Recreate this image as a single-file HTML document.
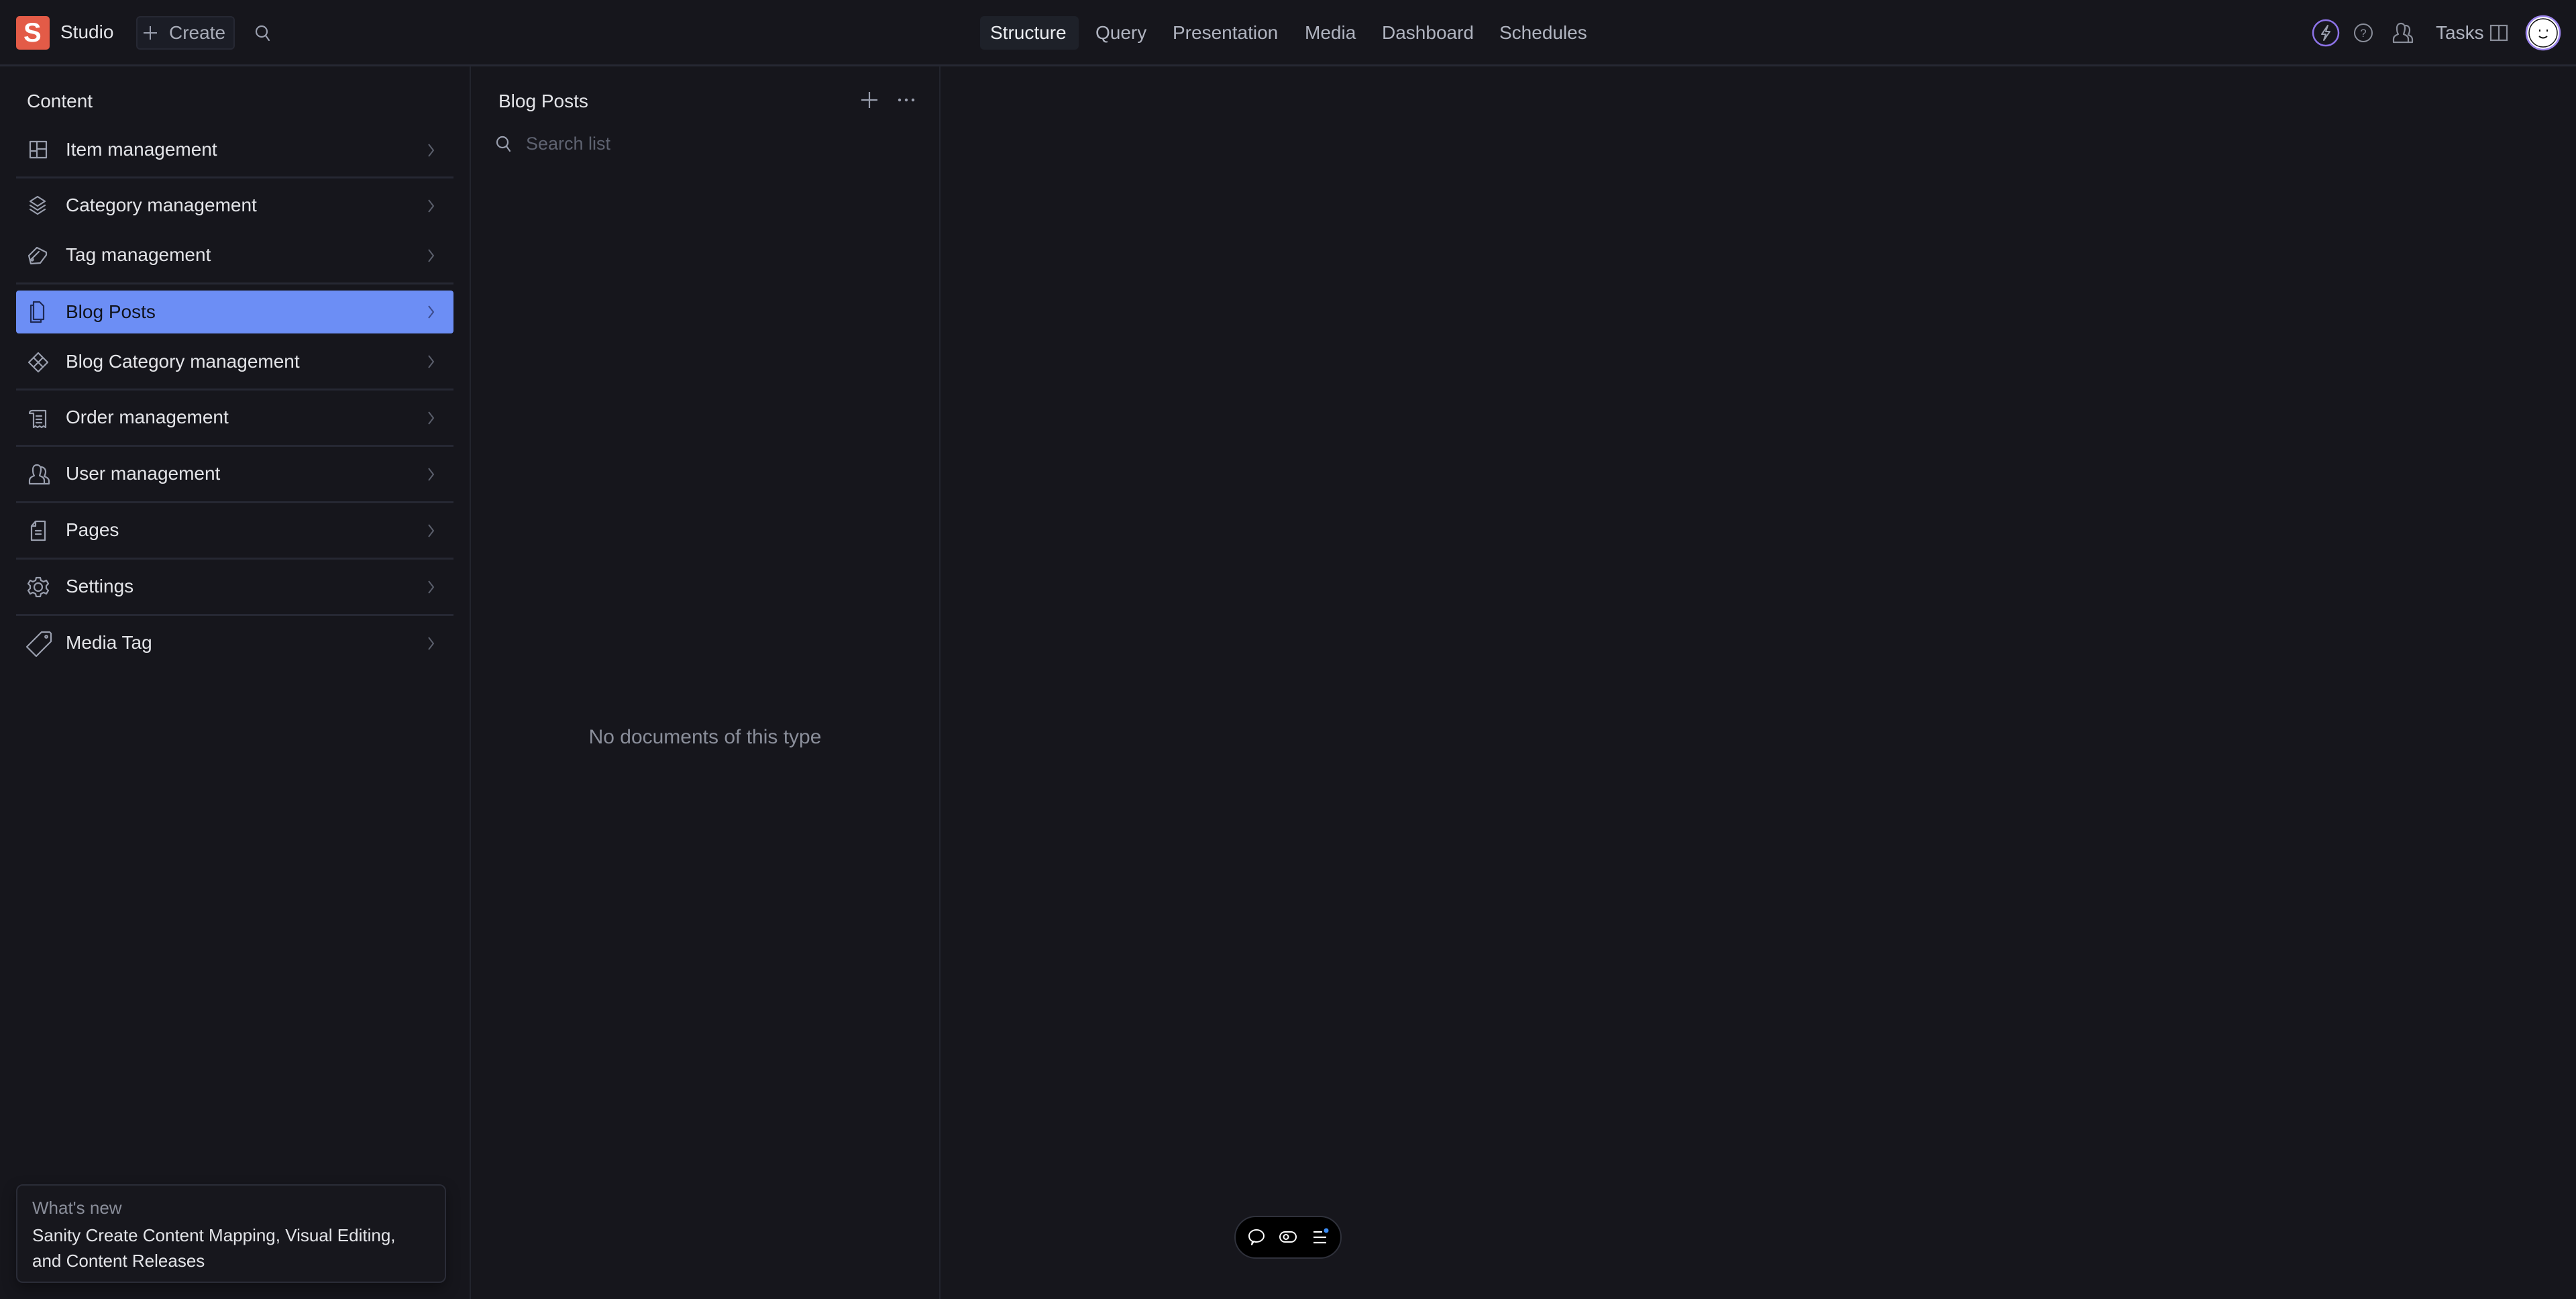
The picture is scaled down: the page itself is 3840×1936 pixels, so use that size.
<!DOCTYPE html>
<html><head><meta charset="utf-8"><style>
*{margin:0;padding:0;box-sizing:border-box}
body{width:3840px;height:1936px;background:#16161c;font-family:"Liberation Sans",sans-serif;color:#e3e4e8;position:relative;overflow:hidden}
.a{position:absolute}
.t{position:absolute;white-space:nowrap;line-height:1}
svg{position:absolute;overflow:visible}
.ic{stroke:#9a9fae;stroke-width:2.2;fill:none;stroke-linecap:round;stroke-linejoin:round}
.div{position:absolute;left:24px;width:652px;height:3px;background:#262833}
.row{position:absolute;left:98px;font-size:28px;color:#e3e4e8;white-space:nowrap;line-height:1}
.chev{position:absolute;left:636px;width:14px;height:24px}
</style></head><body>
<!-- header -->
<div class="a" style="left:0;top:96px;width:3840px;height:3px;background:#262833"></div>
<div class="a" style="left:24px;top:24px;width:50px;height:50px;background:#e35b47;border-radius:5px"></div>
<div class="t" style="left:35px;top:29px;font-size:40px;font-weight:bold;color:#fff">S</div>
<div class="t" style="left:90px;top:34px;font-size:28px">Studio</div>
<div class="a" style="left:203px;top:24px;width:147px;height:50px;background:#1b1d26;border:2px solid #262833;border-radius:6px"></div>
<svg style="left:214px;top:39px" width="20" height="20"><path d="M10 0V20M0 10H20" stroke="#9a9fae" stroke-width="2"/></svg>
<div class="t" style="left:252px;top:35px;font-size:28px;color:#a8acb8">Create</div>
<svg style="left:380px;top:37px" width="24" height="26"><circle cx="10" cy="10" r="8" class="ic"/><path d="M16 16L21 23" class="ic"/></svg>

<div class="a" style="left:1461px;top:24px;width:147px;height:50px;background:#1e2129;border-radius:6px"></div>
<div class="t" style="left:1476px;top:35px;font-size:28px;color:#eceef2">Structure</div>
<div class="t" style="left:1633px;top:35px;font-size:28px;color:#b0b4c0">Query</div>
<div class="t" style="left:1748px;top:35px;font-size:28px;color:#b0b4c0">Presentation</div>
<div class="t" style="left:1945px;top:35px;font-size:28px;color:#b0b4c0">Media</div>
<div class="t" style="left:2060px;top:35px;font-size:28px;color:#b0b4c0">Dashboard</div>
<div class="t" style="left:2235px;top:35px;font-size:28px;color:#b0b4c0">Schedules</div>

<svg style="left:3447px;top:29px" width="40" height="40"><circle cx="20" cy="20" r="19" fill="none" stroke="#8d73e8" stroke-width="2.5"/><path d="M23 9L14 22H20L17 31L26 18H20Z" fill="none" stroke="#9a9fae" stroke-width="2" stroke-linejoin="round"/></svg>
<svg style="left:3509px;top:35px" width="28" height="28"><circle cx="14" cy="14" r="13" fill="none" stroke="#8a8e9a" stroke-width="2"/><text x="14" y="20" font-size="17" fill="#8a8e9a" text-anchor="middle" font-family="Liberation Sans">?</text></svg>
<svg style="left:3566px;top:33px" width="32" height="32"><path d="M2 30V25C2 21 6 19 9 18C7 15 7 12 7 9C7 5 9 2 13 2C17 2 19 5 19 9C19 12 18 15 17 18C20 19 24 21 24 25V30ZM20 5C24 5 26 8 26 12C26 14 25 17 24 19C27 20 30 22 30 26V30H24" class="ic" style="stroke:#8a8e9a"/></svg>
<div class="t" style="left:3631px;top:35px;font-size:28px;color:#b0b4c0">Tasks</div>
<svg style="left:3712px;top:37px" width="26" height="24"><rect x="1" y="1" width="24" height="22" fill="none" stroke="#8a8e9a" stroke-width="2.2"/><path d="M13 1V23" stroke="#8a8e9a" stroke-width="2.2"/></svg>
<svg style="left:3765px;top:23px" width="52" height="52"><circle cx="26" cy="26" r="25" fill="#fff" stroke="#9c84ee" stroke-width="2.5"/><circle cx="26" cy="26" r="21" fill="none" stroke="#111" stroke-width="1.5"/><path d="M21 21V24M32 21V24M20 31Q26 36 32 31" stroke="#111" stroke-width="2" fill="none"/></svg>

<!-- pane borders -->
<div class="a" style="left:700px;top:98px;width:2px;height:1838px;background:#22242d"></div>
<div class="a" style="left:1400px;top:98px;width:2px;height:1838px;background:#22242d"></div>

<!-- left pane -->
<div class="t" style="left:40px;top:137px;font-size:28px;font-weight:500;color:#e3e4e8">Content</div>

<div class="a" style="left:24px;top:433px;width:652px;height:64px;background:#6c8ef5;border-radius:4px"></div>

<div class="div" style="top:263px"></div>
<div class="div" style="top:421px"></div>
<div class="div" style="top:579px"></div>
<div class="div" style="top:663px"></div>
<div class="div" style="top:747px"></div>
<div class="div" style="top:831px"></div>
<div class="div" style="top:915px"></div>

<div class="row" style="top:209px">Item management</div>
<div class="row" style="top:292px">Category management</div>
<div class="row" style="top:366px">Tag management</div>
<div class="row" style="top:451px;color:#10131c">Blog Posts</div>
<div class="row" style="top:525px">Blog Category management</div>
<div class="row" style="top:608px">Order management</div>
<div class="row" style="top:692px">User management</div>
<div class="row" style="top:776px">Pages</div>
<div class="row" style="top:860px">Settings</div>
<div class="row" style="top:944px">Media Tag</div>

<!-- icons -->
<svg style="left:44px;top:210px" width="26" height="26"><rect x="1" y="1" width="24" height="24" class="ic"/><path d="M11 1V25M11 12H25M1 15H11" class="ic"/></svg>
<svg style="left:42px;top:292px" width="28" height="28"><path d="M14 1L25 8L14 15L3 8Z M3 14L14 21L25 14 M3 20L14 27L25 20" class="ic"/></svg>
<svg style="left:42px;top:366px" width="30" height="28"><path d="M4 27L1 15L13 3L27 10L27 14L18 26Z M5 20L16 9" class="ic"/><circle cx="6" cy="21" r="1.5" class="ic"/></svg>
<svg style="left:44px;top:449px" width="26" height="32"><path d="M6 1H15L21 7V27H6Z M6 6H2V31H17V27" stroke="#1f2a55" stroke-width="2.2" fill="none" stroke-linejoin="round"/></svg>
<svg style="left:42px;top:525px" width="30" height="30"><path d="M15 1L29 15L15 29L1 15Z M8 8L22 22 M22 8L8 22" class="ic"/></svg>
<svg style="left:42px;top:610px" width="28" height="28"><path d="M6 2H26V27L23 25L20 27L17 25L14 27L11 25L8 27V6 M6 2C3 2 2 4 2 6H8 M12 10H20M12 15H20M12 20H20" class="ic"/></svg>
<svg style="left:42px;top:692px" width="32" height="30"><path d="M2 29V24C2 20 6 18 9 17C7 14 7 11 7 8C7 4 9 1 13 1C17 1 19 4 19 8C19 11 18 14 17 17C20 18 24 20 24 24V29ZM19 4C23 4 26 7 26 11C26 13 25 16 24 18C27 19 31 21 31 25V29H24" class="ic"/></svg>
<svg style="left:45px;top:776px" width="24" height="30"><path d="M8 1H22V29H2V8Z M8 1V8H2 M8 15H16M8 20H16" class="ic"/></svg>
<svg style="left:41px;top:859px" width="32" height="32"><circle cx="16" cy="16" r="6" class="ic"/><path d="M13 2H19L20 6L24 8L28 6L31 11L28 14V18L31 21L28 26L24 24L20 26L19 30H13L12 26L8 24L4 26L1 21L4 18V14L1 11L4 6L8 8L12 6Z" class="ic"/></svg>
<svg style="left:39px;top:941px" width="38" height="38"><path d="M37 3V15L15 37L1 23L23 1H35Z" class="ic"/><circle cx="30" cy="8" r="1.8" class="ic"/></svg>

<!-- chevrons -->
<svg class="chev" style="top:212px"><path d="M3 3L10 12L3 21" fill="none" stroke="#5b5f6c" stroke-width="2"/></svg>
<svg class="chev" style="top:295px"><path d="M3 3L10 12L3 21" fill="none" stroke="#5b5f6c" stroke-width="2"/></svg>
<svg class="chev" style="top:369px"><path d="M3 3L10 12L3 21" fill="none" stroke="#5b5f6c" stroke-width="2"/></svg>
<svg class="chev" style="top:453px"><path d="M3 3L10 12L3 21" fill="none" stroke="#3b4a8a" stroke-width="2"/></svg>
<svg class="chev" style="top:527px"><path d="M3 3L10 12L3 21" fill="none" stroke="#5b5f6c" stroke-width="2"/></svg>
<svg class="chev" style="top:611px"><path d="M3 3L10 12L3 21" fill="none" stroke="#5b5f6c" stroke-width="2"/></svg>
<svg class="chev" style="top:695px"><path d="M3 3L10 12L3 21" fill="none" stroke="#5b5f6c" stroke-width="2"/></svg>
<svg class="chev" style="top:779px"><path d="M3 3L10 12L3 21" fill="none" stroke="#5b5f6c" stroke-width="2"/></svg>
<svg class="chev" style="top:863px"><path d="M3 3L10 12L3 21" fill="none" stroke="#5b5f6c" stroke-width="2"/></svg>
<svg class="chev" style="top:947px"><path d="M3 3L10 12L3 21" fill="none" stroke="#5b5f6c" stroke-width="2"/></svg>

<!-- what's new -->
<div class="a" style="left:24px;top:1765px;width:641px;height:147px;border:2px solid #2a2c37;border-radius:10px;background:#17171d;box-shadow:0 8px 20px rgba(0,0,0,.35)"></div>
<div class="t" style="left:48px;top:1787px;font-size:26px;color:#8a8e9a">What's new</div>
<div class="t" style="left:48px;top:1828px;font-size:26px;font-weight:500;color:#e3e4e8">Sanity Create Content Mapping, Visual Editing,</div>
<div class="t" style="left:48px;top:1866px;font-size:26px;font-weight:500;color:#e3e4e8">and Content Releases</div>

<!-- middle pane -->
<div class="t" style="left:743px;top:137px;font-size:28px;font-weight:500;color:#e3e4e8">Blog Posts</div>
<svg style="left:1283px;top:136px" width="26" height="26"><path d="M13 1V25M1 13H25" stroke="#9a9fae" stroke-width="2.2"/></svg>
<svg style="left:1338px;top:146px" width="30" height="6"><circle cx="3" cy="3" r="2.2" fill="#9a9fae"/><circle cx="13" cy="3" r="2.2" fill="#9a9fae"/><circle cx="23" cy="3" r="2.2" fill="#9a9fae"/></svg>
<svg style="left:739px;top:202px" width="24" height="26"><circle cx="10" cy="10" r="8" class="ic"/><path d="M16 16L21 23" class="ic"/></svg>
<div class="t" style="left:784px;top:201px;font-size:27px;color:#5e6270">Search list</div>
<div class="t" style="left:1051px;top:1084px;font-size:30px;color:#8a8e9a;transform:translateX(-50%)">No documents of this type</div>

<!-- floating pill -->
<div class="a" style="left:1840px;top:1812px;width:160px;height:64px;background:#000;border:2px solid #2f313b;border-radius:32px"></div>
<svg style="left:1860px;top:1831px" width="26" height="26"><path d="M6 24L7 19C3 17 2 14 2 11C2 6 7 2 13 2C19 2 24 6 24 11C24 16 19 20 13 20C11 20 10 20 9 19Z" fill="none" stroke="#fff" stroke-width="2" stroke-linejoin="round"/></svg>
<svg style="left:1907px;top:1833px" width="26" height="20"><rect x="1" y="3" width="24" height="15" rx="7.5" fill="none" stroke="#fff" stroke-width="2"/><circle cx="10" cy="10.5" r="3.5" fill="none" stroke="#fff" stroke-width="2"/></svg>
<svg style="left:1957px;top:1830px" width="26" height="26"><path d="M1 6H14M1 14H20M1 22H20" stroke="#fff" stroke-width="2.2"/><circle cx="20" cy="4" r="3.5" fill="#3b8cf5"/></svg>
</body></html>
